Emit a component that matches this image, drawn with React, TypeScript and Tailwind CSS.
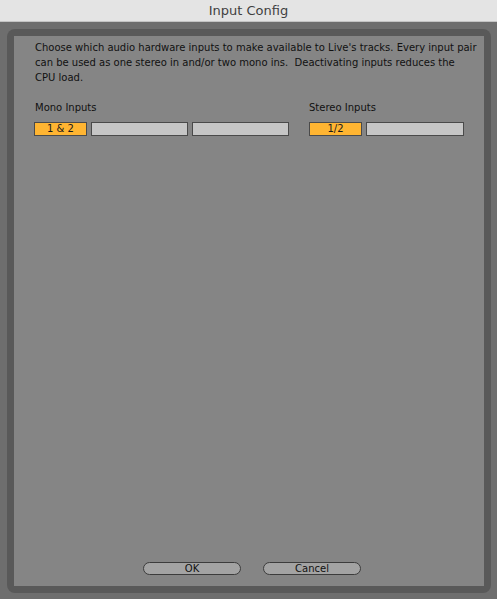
const font = "font-['Lucida_Grande','DejaVu_Sans','Liberation_Sans',sans-serif]";

const Slot = ({ label, active, width }: { label?: string; active?: boolean; width: string }) => (
  <div
    className={`${width} flex-none h-[14px] border border-[#4a4a4a] flex items-center justify-center text-[10px] leading-none text-[#1a1a1a] ${
      active ? "bg-[#ffb532]" : "bg-[#c6c6c6]"
    }`}
  >
    {label}
  </div>
);

const DialogButton = ({ children }: { children: React.ReactNode }) => (
  <button className="w-[98px] h-[13px] flex-none rounded-full border border-[#3c3c3c] bg-[#a3a3a3] text-[10px] leading-none text-[#111]">
    {children}
  </button>
);

export default function App() {
  return (
    <div className={`w-[497px] h-[599px] bg-[#6e6e6e] flex flex-col ${font}`}>
      {/* title bar */}
      <div className="h-[22px] flex-none bg-[#e4e4e4] border-b border-[#c4c4c4] flex items-center justify-center text-[13px] text-[#3f3f3f]">
        Input Config
      </div>

      <div className="flex-1 min-h-0 pt-[7px] pl-[7px] pb-[6px]">
        <div className="w-[484px] h-full rounded-[8px] bg-[#595959] p-[7px]">
          <div className="w-[470px] h-full bg-[#858585] flex flex-col pl-[21px] pt-[4px]">
            <p className="text-[10px] leading-[15px] text-[#111] whitespace-nowrap">
              Choose which audio hardware inputs to make available to Live's tracks. Every input pair
              <br />
              can be used as one stereo in and/or two mono ins.&nbsp; Deactivating inputs reduces the
              <br />
              CPU load.
            </p>

            <div className="flex mt-[15px]">
              <div className="w-[274px] flex-none">
                <div className="text-[10px] leading-[15px] text-[#111]">Mono Inputs</div>
                <div className="flex gap-[4px] mt-[7px] -ml-px">
                  <Slot label="1 & 2" active width="w-[53px]" />
                  <Slot width="w-[97px]" />
                  <Slot width="w-[97px]" />
                </div>
              </div>
              <div>
                <div className="text-[10px] leading-[15px] text-[#111]">Stereo Inputs</div>
                <div className="flex gap-[4px] mt-[7px]">
                  <Slot label="1/2" active width="w-[53px]" />
                  <Slot width="w-[98px]" />
                </div>
              </div>
            </div>

            <div className="mt-auto mb-[11px] flex gap-[22px] ml-[108px]">
              <DialogButton>OK</DialogButton>
              <DialogButton>Cancel</DialogButton>
            </div>
          </div>
        </div>
      </div>
    </div>
  );
}
